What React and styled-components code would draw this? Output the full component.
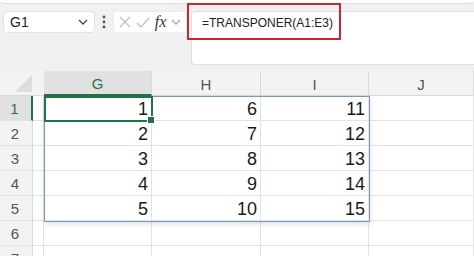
import React from 'react';
import styled, { createGlobalStyle } from 'styled-components';

const GlobalStyle = createGlobalStyle`
  * { box-sizing: border-box; }
  body {
    margin: 0;
    background: #f1f1f1;
    font-family: "Liberation Sans", Arial, sans-serif;
    overflow: hidden;
  }
`;

const Page = styled.div`
  width: 474px;
  height: 256px;
  overflow: hidden;
`;

const RibbonEdge = styled.div`
  height: 4px;
  background: #fff;
  border-bottom: 1px solid #dedede;
  border-radius: 0 0 4px 4px;
`;

const FormulaRow = styled.div`
  display: flex;
  align-items: flex-start;
  padding: 7px 0 0 3px;
  height: 67px;
`;

const NameBox = styled.div`
  width: 92px;
  height: 22px;
  background: #fff;
  border: 1px solid #e2e2e2;
  border-radius: 4px;
  display: flex;
  align-items: center;
  justify-content: space-between;
  padding: 0 6px;
  font-size: 14px;
  color: #222;
`;

const Dots = styled.div`
  width: 18px;
  height: 22px;
  display: flex;
  align-items: center;
  justify-content: center;
`;

const EditButtons = styled.div`
  width: 74px;
  height: 22px;
  background: #fff;
  border: 1px solid #ececec;
  border-radius: 4px;
  display: flex;
  align-items: center;
  justify-content: space-around;
  padding: 0 2px;
`;

const Fx = styled.span`
  font-family: "Liberation Serif", serif;
  font-style: italic;
  font-size: 16px;
  color: #333;
`;

const FormulaBox = styled.div`
  position: relative;
  flex: 1;
  margin-left: 4px;
  height: 54px;
  background: #fff;
  border: 1px solid #e0e0e0;
  border-right: none;
  border-radius: 4px 0 0 4px;
  padding: 4px 0 0 10px;
  font-size: 12px;
  color: #222;
`;

const Highlight = styled.div`
  position: absolute;
  left: -5px;
  top: -9px;
  width: 154px;
  height: 37px;
  border: 2px solid #d3212d;
`;

const Sheet = styled.div`
  display: grid;
  grid-template-columns: 33px 11px 108px 109px 108px 1fr;
  grid-template-rows: repeat(8, 25px);
  background: #fff;
`;

const Corner = styled.div`
  grid-column: 1 / 3;
  grid-row: 1;
  background: #f3f3f3;
  border-bottom: 1px solid #dadada;
  position: relative;
  &::after {
    content: '';
    position: absolute;
    left: 15px;
    top: 4px;
    width: 17px;
    height: 17px;
    background: #dddddd;
    clip-path: polygon(100% 0, 100% 100%, 0 100%);
  }
`;

const ColHead = styled.div`
  grid-row: 1;
  grid-column: ${p => p.$col};
  background: ${p => (p.$active ? '#e1e1e1' : '#f3f3f3')};
  color: ${p => (p.$active ? '#2f6e47' : '#555')};
  border-right: 1px solid #dadada;
  border-bottom: ${p => (p.$active ? '2px solid #217346' : '1px solid #dadada')};
  display: flex;
  align-items: center;
  justify-content: center;
  font-size: 15px;
  padding-top: 2px;
`;

const RowHead = styled.div`
  grid-column: 1;
  grid-row: ${p => p.$row};
  background: ${p => (p.$active ? '#e1e1e1' : '#f3f3f3')};
  color: ${p => (p.$active ? '#2f6e47' : '#555')};
  border-right: ${p => (p.$active ? '2px solid #217346' : '1px solid #dadada')};
  border-bottom: 1px solid #e3e3e3;
  display: flex;
  align-items: center;
  justify-content: center;
  font-size: 15px;
  padding-right: 2px;
`;

const Cell = styled.div`
  grid-column: ${p => p.$col};
  grid-row: ${p => p.$row};
  border-right: 1px solid #e3e3e3;
  border-bottom: 1px solid #e3e3e3;
  display: flex;
  align-items: center;
  justify-content: flex-end;
  padding: 2px 3px 0 0;
  font-size: 18px;
  color: #1a1a1a;
`;

const RangeFrame = styled.div`
  grid-column: 3 / 6;
  grid-row: 2 / 7;
  border: 1px solid #7d97b8;
  margin: 0 -1px -1px 0;
  box-shadow: 0 2px 5px rgba(60, 80, 110, 0.18);
  pointer-events: none;
`;

const ActiveCell = styled.div`
  grid-column: 3;
  grid-row: 2;
  border: 2px solid #217346;
  margin: 0 -1px -1px 0;
  position: relative;
  pointer-events: none;
  &::after {
    content: '';
    position: absolute;
    right: -4px;
    bottom: -4px;
    width: 6px;
    height: 6px;
    background: #217346;
    border: 1px solid #fff;
  }
`;

const Chevron = ({ color = '#555' }) => (
  <svg width="10" height="6" viewBox="0 0 10 6">
    <path d="M1 1 L5 5 L9 1" fill="none" stroke={color} strokeWidth="1.3" />
  </svg>
);

const cols = ['F', 'G', 'H', 'I', 'J'];
const data = [
  [1, 6, 11],
  [2, 7, 12],
  [3, 8, 13],
  [4, 9, 14],
  [5, 10, 15],
];
const rows = [1, 2, 3, 4, 5, 6, 7];

export default function App() {
  return (
    <Page>
      <GlobalStyle />
      <RibbonEdge />
      <FormulaRow>
        <NameBox>
          <span>G1</span>
          <Chevron color="#444" />
        </NameBox>
        <Dots>
          <svg width="4" height="14" viewBox="0 0 4 14">
            <circle cx="2" cy="2" r="1.4" fill="#555" />
            <circle cx="2" cy="7" r="1.4" fill="#555" />
            <circle cx="2" cy="12" r="1.4" fill="#555" />
          </svg>
        </Dots>
        <EditButtons>
          <svg width="12" height="12" viewBox="0 0 12 12">
            <path d="M1 1 L11 11 M11 1 L1 11" stroke="#bdbdbd" strokeWidth="1.2" />
          </svg>
          <svg width="14" height="11" viewBox="0 0 14 11">
            <path d="M1 6 L5 10 L13 1" fill="none" stroke="#bdbdbd" strokeWidth="1.2" />
          </svg>
          <Fx>fx</Fx>
          <Chevron color="#aaa" />
        </EditButtons>
        <FormulaBox>
          =TRANSPONER(A1:E3)
          <Highlight />
        </FormulaBox>
      </FormulaRow>
      <Sheet>
        <Corner />
        {cols.slice(1).map((c, i) => (
          <ColHead key={c} $col={i + 3} $active={c === 'G'}>{c}</ColHead>
        ))}
        {rows.map(r => (
          <React.Fragment key={r}>
            <RowHead $row={r + 1} $active={r === 1}>{r}</RowHead>
            {cols.map((c, i) => (
              <Cell key={c} $row={r + 1} $col={i + 2}>
                {i >= 1 && i <= 3 && data[r - 1] ? data[r - 1][i - 1] : ''}
              </Cell>
            ))}
          </React.Fragment>
        ))}
        <RangeFrame />
        <ActiveCell />
      </Sheet>
    </Page>
  );
}
